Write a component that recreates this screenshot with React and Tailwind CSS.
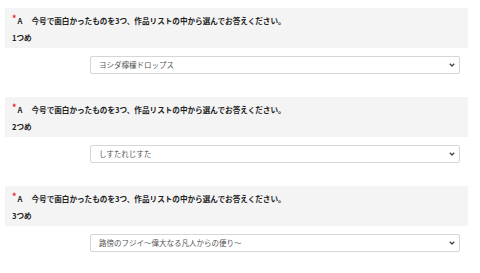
const questions = [
  { no: "1つめ", answer: "ヨシダ檸檬ドロップス" },
  { no: "2つめ", answer: "しすたれじすた" },
  { no: "3つめ", answer: "路傍のフジイ〜偉大なる凡人からの便り〜" },
];

const font = {
  fontFamily: '"Noto Sans CJK JP", "Noto Sans", "Liberation Sans", sans-serif',
};

function Chevron() {
  return (
    <svg width="6" height="4" viewBox="0 0 6 4" className="shrink-0">
      <path d="M0.8 0.8 L3 3 L5.2 0.8" fill="none" stroke="#444" strokeWidth="1.3" />
    </svg>
  );
}

function Question({ no, answer }) {
  return (
    <div className="flex flex-col">
      <div className="ml-[5px] w-[463px] h-[40px] bg-[#f4f4f4] px-[7px] pt-[8px] text-[#222]">
        <div className="flex items-center text-[7.6px] font-bold leading-[10px]">
          <span className="text-[#e8222a] text-[9px] leading-[8px] -mt-[5px]">*</span>
          <span className="ml-[1px]">A</span>
          <span className="ml-[9px]">今号で面白かったものを3つ、作品リストの中から選んでお答えください。</span>
        </div>
        <div className="mt-[7px] text-[7.6px] font-bold leading-[10px]">{no}</div>
      </div>
      <div className="mt-[8px] ml-[90px] w-[370px] h-[18px] border border-[#d6d6d6] rounded-[2px] bg-white flex items-center justify-between pl-[8px] pr-[4px]">
        <span className="text-[7.5px] text-[#555] leading-none">{answer}</span>
        <Chevron />
      </div>
    </div>
  );
}

export default function App() {
  return (
    <div className="w-[480px] h-[273px] bg-white overflow-hidden pt-[8px] flex flex-col gap-[23px]" style={font}>
      {questions.map((q) => (
        <Question key={q.no} {...q} />
      ))}
    </div>
  );
}
